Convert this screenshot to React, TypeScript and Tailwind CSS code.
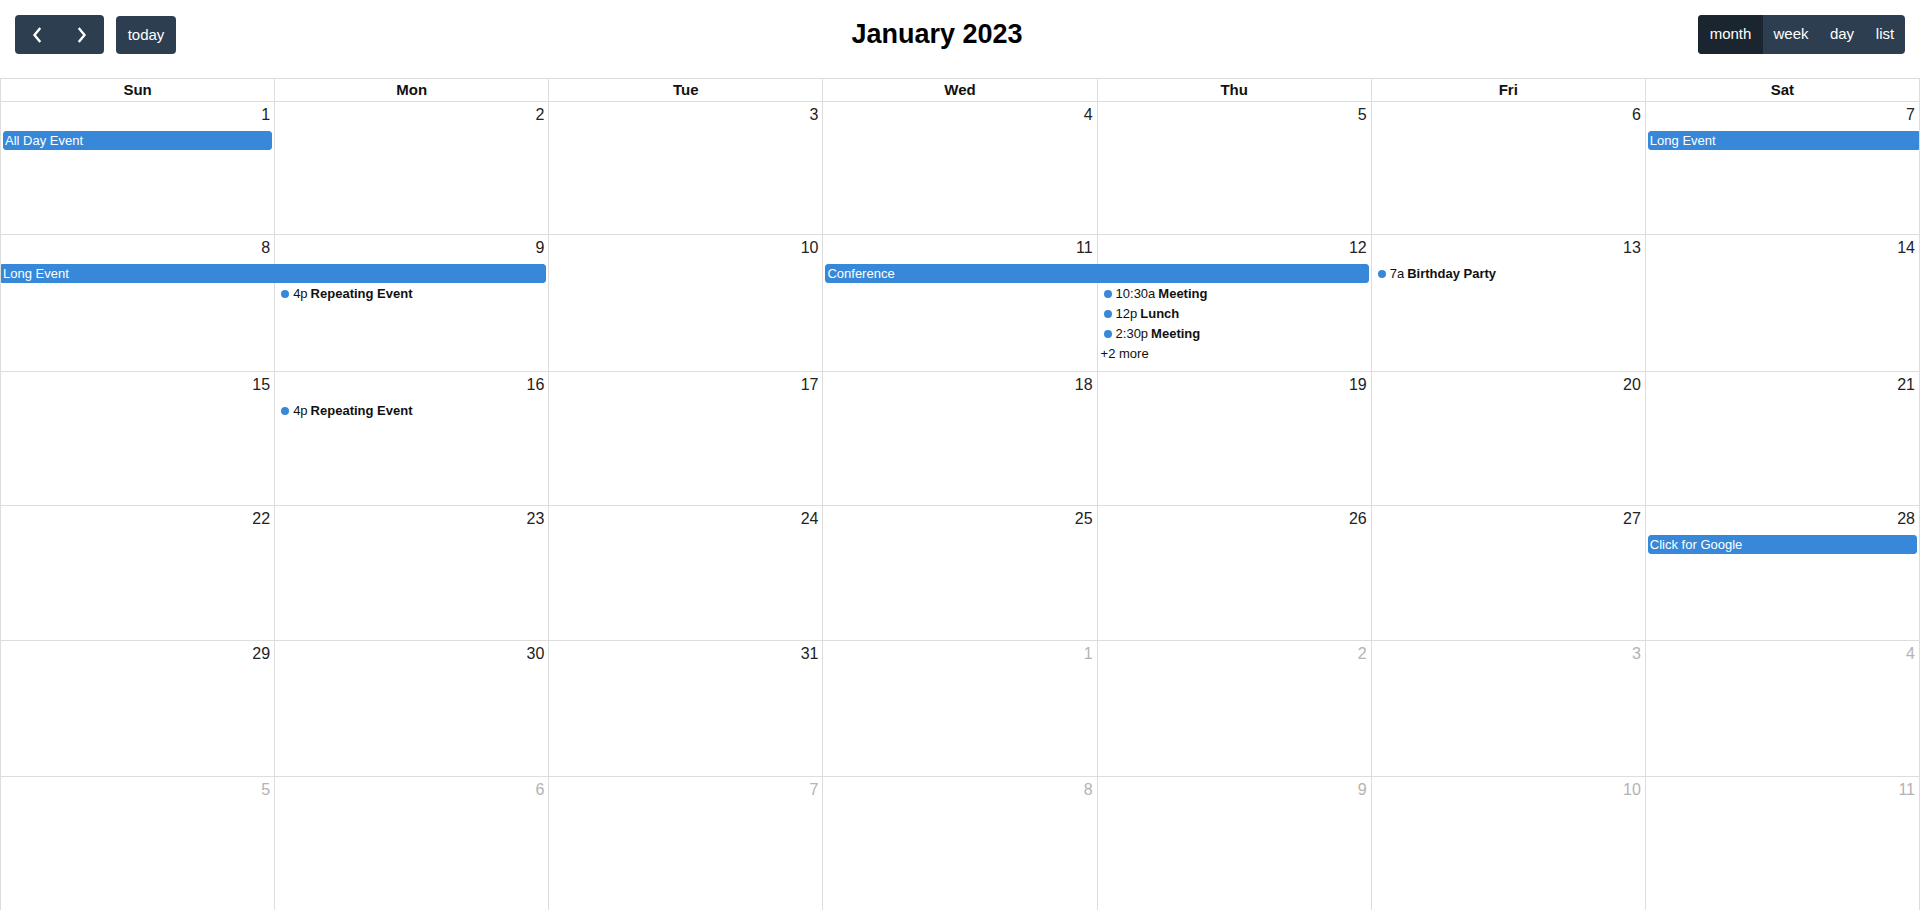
import React from 'react';

type Bar = { title: string; col: number; span: number; slot: number; start: boolean; end: boolean };
type Dot = { time: string; title: string; col: number; slot: number };
type More = { label: string; col: number; slot: number };
type Week = {
  days: { n: number; other?: boolean }[];
  height: string;
  bars: Bar[];
  dots: Dot[];
  more: More[];
};

const colStart = ['', 'col-start-1', 'col-start-2', 'col-start-3', 'col-start-4', 'col-start-5', 'col-start-6', 'col-start-7'];
const colSpan = ['', 'col-span-1', 'col-span-2', 'col-span-3'];
const rowStart = ['row-start-2', 'row-start-3', 'row-start-4', 'row-start-5', 'row-start-6'];

const dayNames = ['Sun', 'Mon', 'Tue', 'Wed', 'Thu', 'Fri', 'Sat'];

const range = (from: number, to: number, other = false) =>
  Array.from({ length: to - from + 1 }, (_, i) => ({ n: from + i, other }));

const weeks: Week[] = [
  {
    days: range(1, 7),
    height: 'h-[133px]',
    bars: [
      { title: 'All Day Event', col: 1, span: 1, slot: 0, start: true, end: true },
      { title: 'Long Event', col: 7, span: 1, slot: 0, start: true, end: false },
    ],
    dots: [],
    more: [],
  },
  {
    days: range(8, 14),
    height: 'h-[137px]',
    bars: [
      { title: 'Long Event', col: 1, span: 2, slot: 0, start: false, end: true },
      { title: 'Conference', col: 4, span: 2, slot: 0, start: true, end: true },
    ],
    dots: [
      { time: '4p', title: 'Repeating Event', col: 2, slot: 1 },
      { time: '10:30a', title: 'Meeting', col: 5, slot: 1 },
      { time: '12p', title: 'Lunch', col: 5, slot: 2 },
      { time: '2:30p', title: 'Meeting', col: 5, slot: 3 },
      { time: '7a', title: 'Birthday Party', col: 6, slot: 0 },
    ],
    more: [{ label: '+2 more', col: 5, slot: 4 }],
  },
  {
    days: range(15, 21),
    height: 'h-[134px]',
    bars: [],
    dots: [{ time: '4p', title: 'Repeating Event', col: 2, slot: 0 }],
    more: [],
  },
  {
    days: range(22, 28),
    height: 'h-[135px]',
    bars: [{ title: 'Click for Google', col: 7, span: 1, slot: 0, start: true, end: true }],
    dots: [],
    more: [],
  },
  {
    days: [...range(29, 31), ...range(1, 4, true)],
    height: 'h-[136px]',
    bars: [],
    dots: [],
    more: [],
  },
  {
    days: range(5, 11, true),
    height: 'h-[135px]',
    bars: [],
    dots: [],
    more: [],
  },
];

const Chevron = ({ dir }: { dir: 'left' | 'right' }) => (
  <svg width="12" height="16" viewBox="0 0 12 16" fill="none">
    <polyline
      points={dir === 'left' ? '8.5,2 3.5,8 8.5,14' : '3.5,2 8.5,8 3.5,14'}
      stroke="white"
      strokeWidth="2.4"
      strokeLinecap="square"
      strokeLinejoin="miter"
    />
  </svg>
);

const Toolbar = () => (
  <div className="flex items-center justify-between px-[15px] pt-[15px] mb-[24px]">
    <div className="flex items-center">
      <div className="flex h-[39px] rounded-[4px] bg-[#2c3e50] overflow-hidden">
        <button className="w-[44px] flex items-center justify-center">
          <Chevron dir="left" />
        </button>
        <button className="w-[45px] flex items-center justify-center">
          <Chevron dir="right" />
        </button>
      </div>
      <button className="ml-[12px] h-[38px] w-[60px] rounded-[4px] bg-[#2c3e50] text-white text-[15px] leading-none">
        today
      </button>
    </div>
    <h2 className="text-[27px] font-bold leading-none text-black">January 2023</h2>
    <div className="flex h-[39px] rounded-[4px] bg-[#2c3e50] overflow-hidden text-white text-[15px]">
      <button className="w-[65px] bg-[#1a252f]">month</button>
      <button className="w-[56px]">week</button>
      <button className="w-[46px]">day</button>
      <button className="w-[40px]">list</button>
    </div>
  </div>
);

const WeekRow = ({ week }: { week: Week }) => (
  <div className={`grid grid-cols-7 grid-rows-[28px_20px_20px_20px_20px_20px_1fr] ${week.height}`}>
    {week.days.map((d, i) => (
      <div
        key={i}
        className={`${colStart[i + 1]} row-start-1 row-span-full border-r border-b border-[#ddd] flex justify-end`}
      >
        <span className={`px-[4px] pt-[4px] text-[16px] leading-[18px] ${d.other ? 'text-[#b3b3b3]' : 'text-[#222]'}`}>
          {d.n}
        </span>
      </div>
    ))}
    {week.bars.map((b, i) => (
      <div
        key={`b${i}`}
        className={`${colStart[b.col]} ${colSpan[b.span]} ${rowStart[b.slot]} mt-[1px] h-[19px] bg-[#3788d8] border border-[#3788d8] text-white text-[13px] leading-[15px] px-[1px] py-[1px] whitespace-nowrap overflow-hidden ${
          b.start ? 'ml-[2px] rounded-l-[3px]' : 'ml-0'
        } ${b.end ? 'mr-[3px] rounded-r-[3px]' : 'mr-[1px]'}`}
      >
        {b.title}
      </div>
    ))}
    {week.dots.map((e, i) => (
      <div
        key={`d${i}`}
        className={`${colStart[e.col]} ${rowStart[e.slot]} mt-[1px] h-[19px] ml-[2px] mr-[3px] flex items-center text-[13px] leading-[15px] text-[#111] whitespace-nowrap overflow-hidden`}
      >
        <span className="mx-[4px] h-[8px] w-[8px] rounded-full bg-[#3788d8] shrink-0" />
        <span>{e.time}</span>
        <span className="ml-[3px] font-bold">{e.title}</span>
      </div>
    ))}
    {week.more.map((m, i) => (
      <div
        key={`m${i}`}
        className={`${colStart[m.col]} ${rowStart[m.slot]} mt-[1px] h-[19px] ml-[3px] flex items-center text-[13px] leading-[15px] text-[#111]`}
      >
        {m.label}
      </div>
    ))}
  </div>
);

export default function App() {
  return (
    <div className="h-[910px] w-full overflow-hidden bg-white font-['Liberation_Sans',Arial,sans-serif]">
      <Toolbar />
      <div className="border-t border-l border-[#ddd]">
        <div className="grid grid-cols-7">
          {dayNames.map((d) => (
            <div
              key={d}
              className="h-[23px] border-r border-b border-[#ddd] flex items-center justify-center text-[15px] font-bold text-[#111]"
            >
              {d}
            </div>
          ))}
        </div>
        {weeks.map((w, i) => (
          <WeekRow key={i} week={w} />
        ))}
      </div>
    </div>
  );
}
